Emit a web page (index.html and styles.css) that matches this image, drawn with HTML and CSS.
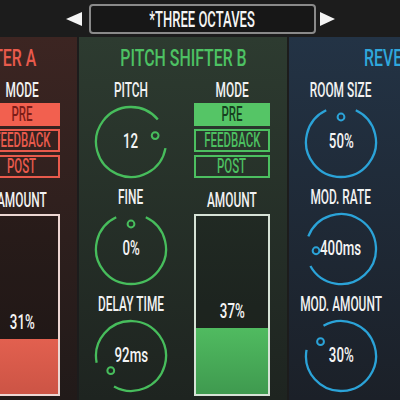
FILE: index.html
```html
<!DOCTYPE html>
<html>
<head>
<meta charset="utf-8">
<link rel="stylesheet" href="styles.css">
</head>
<body>
<header class="topbar">
  <span class="arrow arrow-left"></span>
  <div class="preset"><span class="sx sx-preset">*THREE OCTAVES</span></div>
  <span class="arrow arrow-right"></span>
</header>
<main class="panels">
  <section class="panel red">
    <div class="title"><span class="sx sx-title">PITCH SHIFTER A</span></div>
    <div class="cols">
      <div class="col"></div>
      <div class="col">
        <div class="label"><span class="sx sx-label">MODE</span></div>
        <div class="btn on"><span class="sx sx-btn">PRE</span></div>
        <div class="btn"><span class="sx sx-btn">FEEDBACK</span></div>
        <div class="btn"><span class="sx sx-btn">POST</span></div>
        <div class="label amount"><span class="sx sx-label">AMOUNT</span></div>
        <div class="meter" style="--v:31%">
          <div class="fill"></div>
          <div class="mval"><span class="sx sx-val">31%</span></div>
        </div>
      </div>
    </div>
  </section>
  <section class="panel green">
    <div class="title"><span class="sx sx-title">PITCH SHIFTER B</span></div>
    <div class="cols">
      <div class="col">
        <div class="label"><span class="sx sx-label">PITCH</span></div>
        <div class="knob">
          <svg viewBox="0 0 74 74" width="74" height="74"><path d="M71.47 43.08 A35 35 0 1 1 63.81 14.5"/><circle cx="61.15" cy="30.53" r="3.4"/></svg>
          <div class="kval"><span class="sx sx-val">12</span></div>
        </div>
        <div class="label"><span class="sx sx-label">FINE</span></div>
        <div class="knob">
          <svg viewBox="0 0 74 74" width="74" height="74"><path d="M51.79 5.28 A35 35 0 1 1 22.21 5.28"/><circle cx="37" cy="12" r="3.4"/></svg>
          <div class="kval"><span class="sx sx-val">0%</span></div>
        </div>
        <div class="label"><span class="sx sx-label">DELAY TIME</span></div>
        <div class="knob">
          <svg viewBox="0 0 74 74" width="74" height="74"><path d="M2.64 43.68 A35 35 0 1 1 20.03 67.61"/><circle cx="16.77" cy="51.69" r="3.4"/></svg>
          <div class="kval"><span class="sx sx-val">92ms</span></div>
        </div>
      </div>
      <div class="col">
        <div class="label"><span class="sx sx-label">MODE</span></div>
        <div class="btn on"><span class="sx sx-btn">PRE</span></div>
        <div class="btn"><span class="sx sx-btn">FEEDBACK</span></div>
        <div class="btn"><span class="sx sx-btn">POST</span></div>
        <div class="label amount"><span class="sx sx-label">AMOUNT</span></div>
        <div class="meter" style="--v:37%">
          <div class="fill"></div>
          <div class="mval"><span class="sx sx-val">37%</span></div>
        </div>
      </div>
    </div>
  </section>
  <section class="panel blue">
    <div class="title"><span class="sx sx-title">REVERB</span></div>
    <div class="cols">
      <div class="col">
        <div class="label"><span class="sx sx-label">ROOM SIZE</span></div>
        <div class="knob">
          <svg viewBox="0 0 74 74" width="74" height="74"><path d="M51.79 5.28 A35 35 0 1 1 22.21 5.28"/><circle cx="37" cy="12" r="3.4"/></svg>
          <div class="kval"><span class="sx sx-val">50%</span></div>
        </div>
        <div class="label"><span class="sx sx-label">MOD. RATE</span></div>
        <div class="knob">
          <svg viewBox="0 0 74 74" width="74" height="74"><path d="M4.32 24.46 A35 35 0 1 1 6.39 53.97"/><circle cx="12.06" cy="38.74" r="3.4"/></svg>
          <div class="kval"><span class="sx sx-val">400ms</span></div>
        </div>
        <div class="label"><span class="sx sx-label">MOD. AMOUNT</span></div>
        <div class="knob">
          <svg viewBox="0 0 74 74" width="74" height="74"><path d="M19.5 6.69 A35 35 0 1 1 2.53 30.92"/><circle cx="16.52" cy="22.66" r="3.4"/></svg>
          <div class="kval"><span class="sx sx-val">30%</span></div>
        </div>
      </div>
      <div class="col"></div>
    </div>
  </section>
</main>
</body>
</html>
```
FILE: styles.css
```css
html, body {
  margin: 0;
  padding: 0;
}
body {
  width: 400px;
  height: 400px;
  overflow: hidden;
  background: #1c1c1c;
  font-family: Roboto, "Liberation Sans", sans-serif;
  font-weight: 500;
  color: #f2f2f2;
}
.sx {
  display: inline-block;
  white-space: nowrap;
}
.sx-preset { transform: scale(.62, 1.08); }
.sx-title { transform: scale(.69, 1.08); }
.sx-label { transform: scale(.61, 1.08); }
.sx-btn { transform: scale(.62, 1.08); }
.sx-val { transform: scale(.72, 1.08); }

.topbar {
  height: 37px;
  display: flex;
  align-items: center;
  justify-content: center;
}
.arrow {
  width: 0;
  height: 0;
  border-top: 7.5px solid transparent;
  border-bottom: 7.5px solid transparent;
}
.arrow-left {
  border-right: 16px solid #f4f4f4;
  margin-right: 7px;
  margin-left: 1px;
}
.arrow-right {
  border-left: 15px solid #f4f4f4;
  margin-left: 4px;
}
.preset {
  box-sizing: border-box;
  width: 227px;
  height: 30px;
  border: 2px solid #8a8a8a;
  border-radius: 4px;
  background: #171717;
  display: flex;
  align-items: center;
  justify-content: center;
  font-size: 21px;
  color: #f4f4f4;
}

.panels {
  display: flex;
  gap: 2px;
  margin-left: -131px;
}
.panel {
  flex: none;
  width: 208px;
  height: 363px;
}
.red { background: linear-gradient(#3c2522, #211a19); }
.green { background: linear-gradient(#2d3b30, #1e2420); }
.blue { background: linear-gradient(#233345, #1b2028); }

.title {
  height: 40px;
  margin-bottom: 3px;
  display: flex;
  align-items: center;
  justify-content: center;
  font-size: 23px;
  white-space: nowrap;
}
.red .title { color: #e85a4c; }
.green .title { color: #4dc263; }
.blue .title { color: #2fa7dc; }

.cols {
  display: grid;
  grid-template-columns: 104px 76px;
  column-gap: 11px;
}
.col {
  display: flex;
  flex-direction: column;
  align-items: center;
}
.col:last-child { align-items: stretch; }

.label {
  height: 18px;
  display: flex;
  align-items: center;
  justify-content: center;
  font-size: 19.5px;
  white-space: nowrap;
  margin-bottom: 7px;
}
.col:last-child .label { margin-bottom: 5px; }
.col:last-child .label.amount { margin-top: 9px; margin-bottom: 6px; }

.knob {
  position: relative;
  width: 74px;
  height: 74px;
  margin-bottom: 8px;
}
.knob svg { display: block; }
.knob path {
  fill: none;
  stroke-width: 2.3;
  stroke-linecap: butt;
}
.knob circle {
  fill: none;
  stroke-width: 2;
}
.green .knob path, .green .knob circle { stroke: #47bd5c; }
.blue .knob path, .blue .knob circle { stroke: #2ba3d8; }
.kval {
  position: absolute;
  inset: 0;
  display: flex;
  align-items: center;
  justify-content: center;
  font-size: 18.5px;
  color: #f4f4f4;
}

.btn {
  box-sizing: border-box;
  height: 23px;
  margin-bottom: 3px;
  border: 2px solid;
  display: flex;
  align-items: center;
  justify-content: center;
  font-size: 18.5px;
  overflow: visible;
}
.red .btn { border-color: #e85a4c; color: #e85a4c; }
.green .btn { border-color: #4cbf60; color: #4cbf60; }
.red .btn.on { background: #f2604f; border-color: #f2604f; color: #7c1d18; }
.green .btn.on { background: #55c566; border-color: #55c566; color: #17401f; }

.meter {
  position: relative;
  box-sizing: border-box;
  height: 182px;
  border: 2px solid #d8d8d8;
  background: rgba(0, 0, 0, .12);
}
.red .meter { border-color: #ecd6d2; }
.green .meter { border-color: #d6e2d6; }
.fill {
  position: absolute;
  left: 0;
  right: 0;
  bottom: 0;
  height: var(--v);
}
.red .fill { background: linear-gradient(#e2604f, #cc5445); }
.green .fill { background: linear-gradient(#50bb60, #3f9a4f); }
.mval {
  position: absolute;
  left: 0;
  right: 0;
  bottom: calc(var(--v) + 7px);
  height: 18px;
  display: flex;
  align-items: center;
  justify-content: center;
  font-size: 18.5px;
  color: #f4f4f4;
}
```
